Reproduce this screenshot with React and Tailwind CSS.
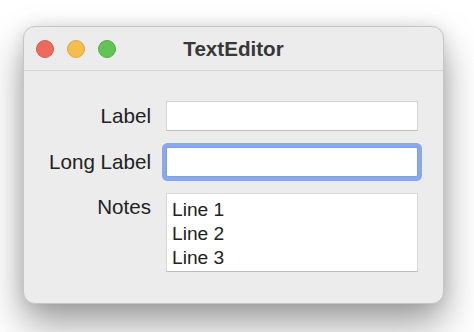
import React from "react";

function Dot({ className }) {
  return <span className={`block h-[18px] w-[18px] rounded-full border ${className}`} />;
}

export default function App() {
  return (
    <div
      className="min-h-screen bg-white pl-[23px] pt-[26px]"
      style={{ fontFamily: '"Liberation Sans", Arial, sans-serif' }}
    >
      <div className="flex h-[278px] w-[421px] flex-col overflow-hidden rounded-[12px] border border-[#c6c6c6] bg-[#ececec] shadow-[0_20px_38px_rgba(0,0,0,0.38),0_0_16px_rgba(0,0,0,0.1)]">
        <div className="grid h-[44px] grid-cols-[1fr_auto_1fr] items-center border-b border-[#d6d6d6] px-[12px]">
          <div className="flex items-center gap-[13px]">
            <Dot className="border-[#de5a4f] bg-[#ee6a5f]" />
            <Dot className="border-[#dea83c] bg-[#f5bd4f]" />
            <Dot className="border-[#52b046] bg-[#61c454]" />
          </div>
          <div className="text-[20.6px] font-bold leading-[24px] text-[#383838]">TextEditor</div>
          <div />
        </div>

        <div className="grid grid-cols-[127px_252px] gap-x-[15px] gap-y-[16px] pt-[30px]">
          <span className="self-center text-right text-[20.6px] leading-[24px] text-[#222]">Label</span>
          <input
            readOnly
            className="h-[30px] border border-[#d5d5d5] border-b-[#bdbdbd] bg-white px-[5px] outline-none"
          />

          <span className="self-center text-right text-[20.6px] leading-[24px] text-[#222]">Long Label</span>
          <input
            readOnly
            className="h-[30px] rounded-[2px] border border-[#7f9ee4] bg-white px-[5px] outline-none ring-[4px] ring-[#8aa8ea]"
          />

          <span className="self-start pt-[2px] text-right text-[20.6px] leading-[24px] text-[#222]">Notes</span>
          <div className="h-[79px] border border-[#d8d8d8] border-b-[#bcbcbc] bg-white pl-[5px] pt-[4px] text-[19.2px] leading-[24px] text-[#222]">
            <div>Line 1</div>
            <div>Line 2</div>
            <div>Line 3</div>
          </div>
        </div>
      </div>
    </div>
  );
}
